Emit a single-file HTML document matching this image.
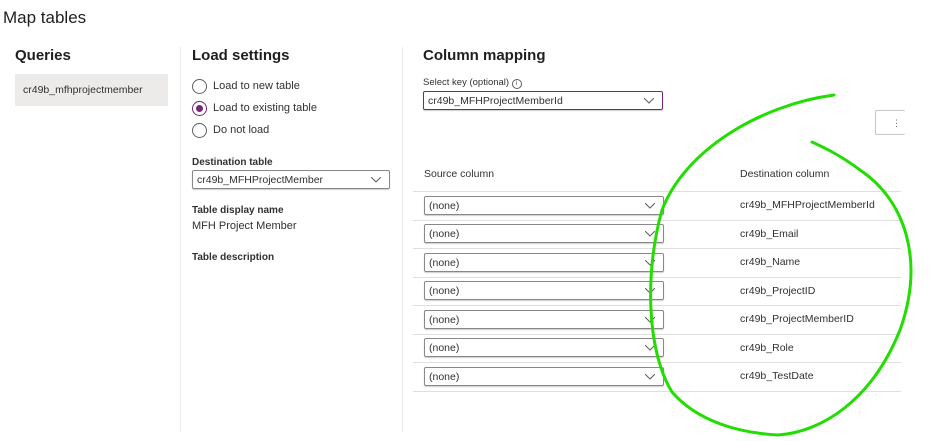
<!DOCTYPE html>
<html><head><style>
body{margin:0;width:936px;height:441px;background:#fff;font-family:"Liberation Sans",sans-serif;color:#323130;position:relative;overflow:hidden}
.a{position:absolute;white-space:nowrap}
.h{font-weight:bold;font-size:15px;color:#201f1e}
.lbl{font-size:10px;font-weight:bold;color:#323130}
.dd{position:absolute;border:1px solid #8a8886;border-radius:2px;height:19px;font-size:10.5px;line-height:19px;padding-left:4px;box-sizing:border-box;box-shadow:0 1px 1px #ccc}
.dd svg{position:absolute;right:8px;top:6px}
.rad{position:absolute;width:15px;height:15px;border:1px solid #605e5c;border-radius:50%;box-sizing:border-box}
.rt{font-size:11px}
.ln{position:absolute;left:413px;width:488px;height:1px;background:#e1dfdd}
</style></head><body>
<div class="a" style="left:3px;top:-9px;font-size:11px;color:#605e5c">Get data</div>
<div class="a" style="left:3px;top:8px;font-size:17px;color:#201f1e">Map tables</div>

<div class="a h" style="left:15px;top:47px">Queries</div>
<div class="a" style="left:15px;top:74px;width:153px;height:32px;background:#edebe9"></div>
<div class="a" style="left:23px;top:84px;font-size:10.5px">cr49b_mfhprojectmember</div>

<div class="a" style="left:180px;top:47px;width:1px;height:385px;background:#edebe9"></div>
<div class="a" style="left:402px;top:47px;width:1px;height:385px;background:#edebe9"></div>

<div class="a h" style="left:192px;top:47px">Load settings</div>
<div class="rad" style="left:192px;top:79px"></div><div class="a rt" style="left:213px;top:80px">Load to new table</div>
<div class="rad" style="left:192px;top:101px;border-color:#742774"><div style="position:absolute;left:3px;top:3px;width:7px;height:7px;border-radius:50%;background:#742774"></div></div><div class="a rt" style="left:213px;top:102px">Load to existing table</div>
<div class="rad" style="left:192px;top:123px"></div><div class="a rt" style="left:213px;top:124px">Do not load</div>
<div class="a lbl" style="left:192px;top:157px">Destination table</div>
<div class="dd" style="left:192px;top:170px;width:198px">cr49b_MFHProjectMember<svg width="10" height="6"><path d="M0 0L5 5L10 0" fill="none" stroke="#605e5c"/></svg></div>
<div class="a lbl" style="left:192px;top:205px">Table display name</div>
<div class="a" style="left:192px;top:220px;font-size:11px">MFH Project Member</div>
<div class="a lbl" style="left:192px;top:252px">Table description</div>

<div class="a h" style="left:423px;top:47px">Column mapping</div>
<div class="a" style="left:423px;top:77px;font-size:9.5px">Select key (optional) <span style="display:inline-block;width:8px;height:8px;border:1px solid #605e5c;border-radius:50%;font-size:6px;line-height:8px;text-align:center">i</span></div>
<div class="dd" style="left:423px;top:91px;width:240px;border:1.5px solid #742774">cr49b_MFHProjectMemberId<svg width="10" height="6"><path d="M0 0L5 5L10 0" fill="none" stroke="#605e5c"/></svg></div>
<div class="a" style="left:875px;top:110px;width:30px;height:25px;border:1px solid #c8c6c4;border-right:none;border-radius:2px;font-size:9px;color:#605e5c;line-height:25px;padding-left:16px;box-sizing:border-box">⋮</div>

<div class="a" style="left:424px;top:168px;font-size:10.5px">Source column</div>
<div class="a" style="left:740px;top:168px;font-size:10.5px">Destination column</div>
<div class="ln" style="top:191px"></div>
<div class="ln" style="top:220px"></div>
<div class="ln" style="top:248px"></div>
<div class="ln" style="top:277px"></div>
<div class="ln" style="top:305px"></div>
<div class="ln" style="top:334px"></div>
<div class="ln" style="top:362px"></div>
<div class="ln" style="top:391px"></div>

<div class="dd" style="left:424px;top:196px;width:240px">(none)<svg width="10" height="6"><path d="M0 0L5 5L10 0" fill="none" stroke="#605e5c"/></svg></div>
<div class="dd" style="left:424px;top:224px;width:240px">(none)<svg width="10" height="6"><path d="M0 0L5 5L10 0" fill="none" stroke="#605e5c"/></svg></div>
<div class="dd" style="left:424px;top:253px;width:240px">(none)<svg width="10" height="6"><path d="M0 0L5 5L10 0" fill="none" stroke="#605e5c"/></svg></div>
<div class="dd" style="left:424px;top:281px;width:240px">(none)<svg width="10" height="6"><path d="M0 0L5 5L10 0" fill="none" stroke="#605e5c"/></svg></div>
<div class="dd" style="left:424px;top:310px;width:240px">(none)<svg width="10" height="6"><path d="M0 0L5 5L10 0" fill="none" stroke="#605e5c"/></svg></div>
<div class="dd" style="left:424px;top:338px;width:240px">(none)<svg width="10" height="6"><path d="M0 0L5 5L10 0" fill="none" stroke="#605e5c"/></svg></div>
<div class="dd" style="left:424px;top:367px;width:240px">(none)<svg width="10" height="6"><path d="M0 0L5 5L10 0" fill="none" stroke="#605e5c"/></svg></div>

<div class="a" style="left:740px;top:199px;font-size:10.5px">cr49b_MFHProjectMemberId</div>
<div class="a" style="left:740px;top:228px;font-size:10.5px">cr49b_Email</div>
<div class="a" style="left:740px;top:256px;font-size:10.5px">cr49b_Name</div>
<div class="a" style="left:740px;top:285px;font-size:10.5px">cr49b_ProjectID</div>
<div class="a" style="left:740px;top:313px;font-size:10.5px">cr49b_ProjectMemberID</div>
<div class="a" style="left:740px;top:342px;font-size:10.5px">cr49b_Role</div>
<div class="a" style="left:740px;top:370px;font-size:10.5px">cr49b_TestDate</div>

<svg class="a" style="left:0;top:0" width="936" height="441"><path d="M834 95 C760 105 685 150 662 210 C645 270 646 350 672 392 C698 422 740 433 778 435 C822 432 872 400 900 330 C925 260 905 200 860 170 C840 155 825 148 812 142" fill="none" stroke="#22dd00" stroke-width="3" stroke-linecap="round"/></svg>
</body></html>
